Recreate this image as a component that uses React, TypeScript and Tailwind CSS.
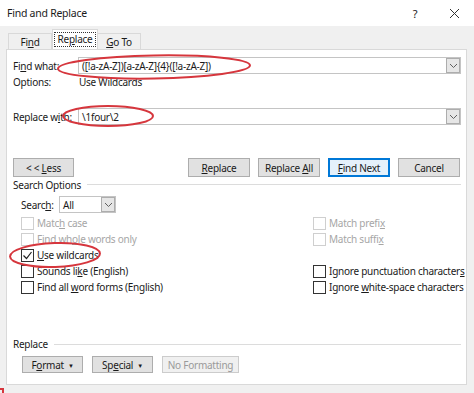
import React from "react";

function Chevron({ color = "#606060" }: { color?: string }) {
  return (
    <svg width="9" height="6" viewBox="0 0 9 6" fill="none">
      <path d="M1 1l3.5 3.5L8 1" stroke={color} strokeWidth="1" />
    </svg>
  );
}

function Combo({ value, width }: { value: string; width: string }) {
  return (
    <div className={`${width} flex-none h-[17px] flex items-center border border-[#c4c4c4] bg-white`}>
      <span className="flex-1 pl-[3px] leading-none whitespace-nowrap">{value}</span>
      <div className="w-[14px] h-[15px] flex-none flex items-center justify-center bg-[#e6e6e6] border border-[#adadad]">
        <Chevron />
      </div>
    </div>
  );
}

function Btn({
  children,
  width,
  primary,
  disabled,
  height = "h-[19px]",
}: {
  children: React.ReactNode;
  width: string;
  primary?: boolean;
  disabled?: boolean;
  height?: string;
}) {
  return (
    <div
      className={`${width} ${height} flex-none flex items-center justify-center whitespace-nowrap ${
        primary
          ? "border-2 border-[#0078d7] bg-[#e5f1fb]"
          : disabled
          ? "border border-[#cccccc] bg-[#f0f0f0] text-[#9a9a9a]"
          : "border border-[#adadad] bg-[#e1e1e1]"
      }`}
    >
      <span className="leading-none">{children}</span>
    </div>
  );
}

function Check({
  label,
  checked,
  disabled,
}: {
  label: React.ReactNode;
  checked?: boolean;
  disabled?: boolean;
}) {
  return (
    <div className={`h-[16px] flex items-center whitespace-nowrap ${disabled ? "text-[#a6a6a6]" : ""}`}>
      <div
        className={`w-[13px] h-[13px] flex-none border bg-white flex items-center justify-center ${
          disabled ? "border-[#cfcfcf]" : "border-[#333333]"
        }`}
      >
        {checked && (
          <svg width="11" height="11" viewBox="0 0 11 11" fill="none">
            <path d="M1.5 5.5l3 3 5-6.5" stroke="#222" strokeWidth="1.2" />
          </svg>
        )}
      </div>
      <span className="pl-[3px] leading-none">{label}</span>
    </div>
  );
}

function GroupLabel({ text, className }: { text: string; className?: string }) {
  return (
    <div className={`flex items-center gap-[6px] ${className ?? ""}`}>
      <span className="leading-none whitespace-nowrap">{text}</span>
      <div className="flex-1 h-px bg-[#dcdcdc]" />
    </div>
  );
}

export default function App() {
  return (
    <div className="relative w-[474px] h-[393px] overflow-hidden bg-[#f0f0f0] text-[10px] tracking-[-0.25px] text-[#1a1a1a] [font-family:'Noto_Sans','Open_Sans',sans-serif]">
      {/* title bar */}
      <div className="h-[26px] bg-white flex items-center pl-[7px] pr-[14px]">
        <span className="flex-1 text-[10.5px] leading-none">Find and Replace</span>
        <span className="w-[10px] text-center text-[11px] leading-none mr-[29px]">?</span>
        <svg width="11" height="11" viewBox="0 0 11 11" fill="none">
          <path d="M1 1l9 9M10 1l-9 9" stroke="#333" strokeWidth="1" />
        </svg>
      </div>

      {/* tabs */}
      <div className="h-[23px] flex items-end pl-[8px]">
        <div className="w-[44px] h-[16px] border border-b-0 border-[#d9d9d9] bg-[#f0f0f0] flex items-center justify-center">
          <span className="leading-none">
            Fi<u>n</u>d
          </span>
        </div>
        <div className="w-[46px] h-[20px] border border-b-0 border-[#d9d9d9] bg-white flex items-center justify-center">
          <span className="border border-dotted border-[#333] px-[3px] leading-[13px]">
            Re<u>p</u>lace
          </span>
        </div>
        <div className="w-[43px] h-[16px] border border-b-0 border-l-0 border-[#d9d9d9] bg-[#f0f0f0] flex items-center justify-center">
          <span className="leading-none">
            <u>G</u>o To
          </span>
        </div>
      </div>

      {/* tab page */}
      <div className="ml-[6px] w-[461px] h-[336px] bg-white border border-[#d9d9d9] pl-[6px] pr-[5px] whitespace-nowrap">
        <div className="mt-[7px] flex items-center h-[17px]">
          <span className="w-[65px] flex-none leading-none">
            Fi<u>n</u>d what:
          </span>
          <Combo value="([!a-zA-Z])[a-zA-Z]{4}([!a-zA-Z])" width="w-[383px]" />
        </div>
        <div className="h-[16px] flex items-center">
          <span className="w-[66px] flex-none leading-none">Options:</span>
          <span className="leading-none">Use Wildcards</span>
        </div>

        <div className="mt-[18px] flex items-center h-[17px]">
          <span className="w-[65px] flex-none leading-none">
            Replace w<u>i</u>th:
          </span>
          <Combo value="\1four\2" width="w-[383px]" />
        </div>

        <div className="mt-[33px] flex items-center h-[19px]">
          <Btn width="w-[61px]">
            &lt; &lt; <u>L</u>ess
          </Btn>
          <div className="ml-[114px] flex gap-[8px]">
            <Btn width="w-[62px]">
              <u>R</u>eplace
            </Btn>
            <Btn width="w-[62px]">
              Replace <u>A</u>ll
            </Btn>
            <Btn width="w-[62px]" primary>
              <u>F</u>ind Next
            </Btn>
            <Btn width="w-[62px]">Cancel</Btn>
          </div>
        </div>

        <GroupLabel text="Search Options" className="h-[15px]" />

        <div className="mt-[4px] ml-[8px] flex items-center h-[17px]">
          <span className="w-[38px] flex-none leading-none">
            Searc<u>h</u>:
          </span>
          <Combo value="All" width="w-[57px]" />
        </div>

        <div className="mt-[2px] ml-[8px] grid grid-cols-[292px_150px]">
          <Check label={<>Matc<u>h</u> case</>} disabled />
          <Check label={<>Match prefi<u>x</u></>} disabled />
          <Check label={<>Find wh<u>o</u>le words only</>} disabled />
          <Check label={<>Match suffi<u>x</u></>} disabled />
          <Check label={<><u>U</u>se wildcards</>} checked />
          <div className="h-[16px]" />
          <Check label={<>Sounds li<u>k</u>e (English)</>} />
          <Check label={<>Ignore punctuation character<u>s</u></>} />
          <Check label={<>Find all <u>w</u>ord forms (English)</>} />
          <Check label={<>Ignore <u>w</u>hite-space characters</>} />
        </div>

        <GroupLabel text="Replace" className="mt-[42px] h-[14px]" />

        <div className="mt-[5px] ml-[9px] flex gap-[9px] h-[17px]">
          <Btn width="w-[61px]" height="h-[17px]">
            F<u>o</u>rmat<span className="ml-[4px] text-[6px] align-middle">▼</span>
          </Btn>
          <Btn width="w-[61px]" height="h-[17px]">
            Sp<u>e</u>cial<span className="ml-[4px] text-[6px] align-middle">▼</span>
          </Btn>
          <Btn width="w-[77px]" height="h-[17px]" disabled>
            No Formatting
          </Btn>
        </div>
      </div>

      {/* red annotation ellipses */}
      <svg className="absolute inset-0 pointer-events-none" width="474" height="393" viewBox="0 0 474 393" fill="none">
        <ellipse cx="154" cy="67" rx="96" ry="11.5" stroke="#d6363d" strokeWidth="2" transform="rotate(-1 154 67)" />
        <ellipse cx="108" cy="116" rx="45" ry="10" stroke="#d6363d" strokeWidth="2" />
        <ellipse cx="55" cy="255" rx="45" ry="12" stroke="#d6363d" strokeWidth="2" transform="rotate(-2 55 255)" />
        <path d="M0 389h3v4" stroke="#d6363d" strokeWidth="2" />
      </svg>
    </div>
  );
}
